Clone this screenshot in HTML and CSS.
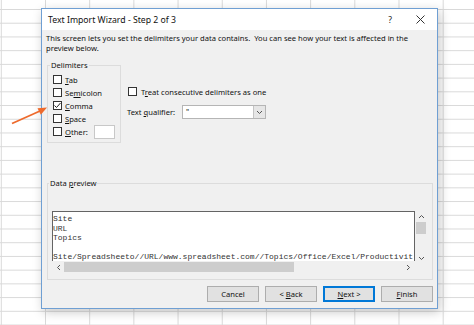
FILE: index.html
```html
<!DOCTYPE html>
<html>
<head>
<meta charset="utf-8">
<link rel="stylesheet" href="styles.css">
</head>
<body>
<div class="dialog">
  <div class="titlebar">
    <span class="title">Text Import Wizard - Step 2 of 3</span>
    <span class="help">?</span>
    <svg class="close" width="9" height="9" viewBox="0 0 9 9"><path d="M0.5 0.5L8.5 8.5M8.5 0.5L0.5 8.5" stroke="#333" stroke-width="1" fill="none"/></svg>
  </div>
  <div class="content">
    <p class="desc">This screen lets you set the delimiters your data contains.&nbsp; You can see how your text is affected in the<br>preview below.</p>
    <div class="options">
      <fieldset class="group delims">
        <legend>Delimiters</legend>
        <label class="cb"><span class="box"></span><span><u>T</u>ab</span></label>
        <label class="cb"><span class="box"></span><span>Se<u>m</u>icolon</span></label>
        <label class="cb"><span class="box checked"><svg width="9" height="9" viewBox="0 0 9 9"><path d="M1.5 4.5L3.5 6.5L7.5 2" stroke="#222" stroke-width="1" fill="none"/></svg></span><span><u>C</u>omma</span></label>
        <label class="cb"><span class="box"></span><span><u>S</u>pace</span></label>
        <label class="cb"><span class="box"></span><span><u>O</u>ther:</span><span class="other"></span></label>
      </fieldset>
      <div class="right">
        <label class="cb"><span class="box"></span><span>T<u>r</u>eat consecutive delimiters as one</span></label>
        <div class="qual">
          <span class="qlabel">Text <u>q</u>ualifier:</span>
          <div class="combo"><span class="val">"</span><span class="drop"><svg width="7" height="5" viewBox="0 0 7 5"><path d="M1 1L3.5 3.5L6 1" stroke="#555" stroke-width="1" fill="none"/></svg></span></div>
        </div>
      </div>
    </div>
    <fieldset class="group preview">
      <legend>Data <u>p</u>review</legend>
      <div class="pv">
        <div class="pvrow">
          <div class="pvtext">Site
URL
Topics

Site/Spreadsheeto//URL/www.spreadsheet.com//Topics/Office/Excel/Productivit</div>
          <div class="vscroll">
            <svg width="7" height="5" viewBox="0 0 7 5"><path d="M1 4L3.5 1.5L6 4" stroke="#555" stroke-width="1" fill="none"/></svg>
            <div class="vthumb"></div>
            <div class="vspace"></div>
            <svg width="7" height="5" viewBox="0 0 7 5"><path d="M1 1L3.5 3.5L6 1" stroke="#555" stroke-width="1" fill="none"/></svg>
          </div>
        </div>
        <div class="hscroll">
          <svg width="5" height="7" viewBox="0 0 5 7"><path d="M4 1L1.5 3.5L4 6" stroke="#555" stroke-width="1" fill="none"/></svg>
          <div class="hthumb"></div>
          <div class="hspace"></div>
          <svg width="5" height="7" viewBox="0 0 5 7"><path d="M1 1L3.5 3.5L1 6" stroke="#555" stroke-width="1" fill="none"/></svg>
          <div class="corner"></div>
        </div>
      </div>
    </fieldset>
    <div class="buttons">
      <button class="btn">Cancel</button>
      <button class="btn">&lt; <u>B</u>ack</button>
      <button class="btn default"><u>N</u>ext &gt;</button>
      <button class="btn"><u>F</u>inish</button>
    </div>
  </div>
</div>
<svg class="arrow" width="50" height="30" viewBox="0 0 50 30"><path d="M12 23.5L40 11" stroke="#ee6a2c" stroke-width="1.8" fill="none"/><path d="M47 7.5L37.5 8.2L40.8 14.8Z" fill="#ee6a2c"/></svg>
</body>
</html>
```
FILE: styles.css
```css
html, body {
  margin: 0;
  padding: 0;
}
body {
  width: 474px;
  height: 325px;
  overflow: hidden;
  position: relative;
  background-color: #fff;
  background-image:
    linear-gradient(to right, #d9d9d9 1px, transparent 1px),
    linear-gradient(to bottom, #d9d9d9 1px, transparent 1px);
  background-size: 44.2px 13.73px;
  background-position: 45px 9px;
  font-family: "Noto Sans", "DejaVu Sans", sans-serif;
  font-size: 7.6px;
  color: #111;
}
.dialog {
  position: absolute;
  left: 41px;
  top: 8px;
  width: 395px;
  height: 299px;
  border: 1px solid #6f9fd3;
  background: #f0f0f0;
  box-shadow: 2px 3px 10px rgba(0, 0, 0, 0.22);
  display: flex;
  flex-direction: column;
}
.titlebar {
  height: 21px;
  background: #fff;
  display: flex;
  align-items: center;
  padding-left: 6px;
  padding-right: 12px;
}
.title {
  font-size: 8.7px;
  flex: 1;
}
.help {
  font-size: 8.6px;
  margin-right: 24px;
  color: #222;
}
.close {
  display: block;
}
.content {
  padding: 3px 4px 0 4px;
  display: flex;
  flex-direction: column;
  flex: 1;
}
.desc {
  margin: 0 0 7px 0;
  line-height: 10px;
  white-space: nowrap;
}
.options {
  display: flex;
  align-items: flex-start;
}
.group {
  border: 1px solid #dcdcdc;
  margin: 0 0 0 1px;
  padding: 3px 0 4px 5px;
  min-width: 0;
}
.group legend {
  padding: 0 1px;
  margin-left: -3px;
  line-height: 10px;
}
.delims {
  width: 67px;
}
.cb {
  display: flex;
  align-items: center;
  height: 13px;
  white-space: nowrap;
}
.box {
  width: 7px;
  height: 7px;
  border: 1px solid #333;
  background: #fff;
  margin-right: 3px;
  flex: none;
  position: relative;
}
.box svg {
  position: absolute;
  left: -1px;
  top: -1px;
}
.right .box {
  margin-right: 4px;
}
.other {
  width: 19px;
  height: 12px;
  border: 1px solid #c8c8c8;
  background: #fff;
  margin-left: 6px;
}
.right {
  padding-top: 25px;
  margin-left: 7px;
}
.qual {
  display: flex;
  align-items: center;
  margin-top: 7px;
}
.qlabel {
  width: 55px;
  margin-left: -1px;
}
.combo {
  width: 82px;
  height: 12px;
  border: 1px solid #b5b5b5;
  background: #fff;
  display: flex;
  align-items: center;
}
.combo .val {
  flex: 1;
  padding-left: 3px;
  line-height: 10px;
  height: 12px;
}
.drop {
  width: 11px;
  height: 12px;
  background: #e6e6e6;
  border-left: 1px solid #c4c4c4;
  display: flex;
  align-items: center;
  justify-content: center;
}
.drop svg { display: block; }
.preview {
  margin-top: 35px;
  padding: 23px 4px 6px 4px;
}
.pv {
  display: flex;
  flex-direction: column;
  width: 375px;
}
.pvrow {
  display: flex;
  height: 50px;
}
.pvtext {
  width: 363px;
  height: 50px;
  background: #fff;
  border-top: 1px solid #646464;
  border-left: 1px solid #646464;
  border-right: 1px solid #646464;
  overflow: hidden;
  white-space: pre;
  font-family: "Liberation Mono", "Courier New", monospace;
  font-size: 8px;
  line-height: 9.6px;
  padding-top: 2px;
  box-sizing: border-box;
  color: #333;
}
.vscroll {
  width: 12px;
  background: #f0f0f0;
  display: flex;
  flex-direction: column;
  align-items: center;
  padding-top: 3px;
}
.vscroll svg { display: block; flex: none; }
.vthumb {
  width: 10px;
  height: 12px;
  background: #cdcdcd;
  margin-top: 3px;
}
.vspace { flex: 1; }
.hscroll {
  height: 12px;
  display: flex;
  align-items: center;
  background: #f0f0f0;
  padding-left: 4px;
}
.hscroll svg { display: block; flex: none; }
.hthumb {
  width: 230px;
  height: 10px;
  background: #cdcdcd;
  margin-left: 3px;
}
.hspace { flex: 1; }
.corner {
  width: 12px;
  margin-left: 4px;
  height: 12px;
}
.buttons {
  display: flex;
  justify-content: flex-end;
  gap: 6px;
  margin-top: 6px;
}
.btn {
  width: 52px;
  height: 16px;
  border: 1px solid #adadad;
  background: #e1e1e1;
  font-family: "Noto Sans", "DejaVu Sans", sans-serif;
  font-size: 7.6px;
  color: #111;
  padding: 0;
  margin: 0;
}
.btn.default {
  border: 1px solid #0078d7;
  box-shadow: inset 0 0 0 1px #0078d7;
}
.arrow {
  position: absolute;
  left: 0;
  top: 100px;
}
```
